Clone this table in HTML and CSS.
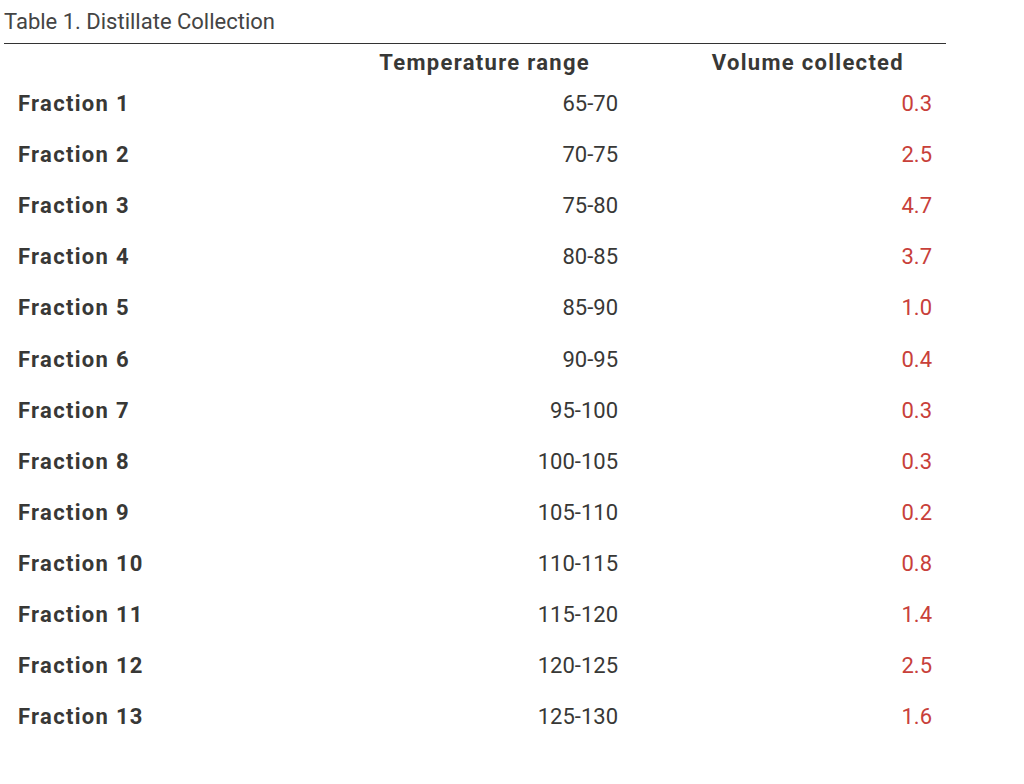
FILE: index.html
```html
<!DOCTYPE html>
<html>
<head>
<meta charset="utf-8">
<link rel="stylesheet" href="styles.css">
</head>
<body>
<table class="data">
<caption class="cap">Table 1. Distillate Collection</caption>
<thead>
<tr><th class="h-empty"></th><th class="h-num h-temp">Temperature range</th><th class="h-num h-vol">Volume collected</th></tr>
</thead>
<tbody>
<tr><th class="lbl">Fraction 1</th><td class="temp">65-70</td><td class="vol">0.3</td></tr>
<tr><th class="lbl">Fraction 2</th><td class="temp">70-75</td><td class="vol">2.5</td></tr>
<tr><th class="lbl">Fraction 3</th><td class="temp">75-80</td><td class="vol">4.7</td></tr>
<tr><th class="lbl">Fraction 4</th><td class="temp">80-85</td><td class="vol">3.7</td></tr>
<tr><th class="lbl">Fraction 5</th><td class="temp">85-90</td><td class="vol">1.0</td></tr>
<tr><th class="lbl">Fraction 6</th><td class="temp">90-95</td><td class="vol">0.4</td></tr>
<tr><th class="lbl">Fraction 7</th><td class="temp">95-100</td><td class="vol">0.3</td></tr>
<tr><th class="lbl">Fraction 8</th><td class="temp">100-105</td><td class="vol">0.3</td></tr>
<tr><th class="lbl">Fraction 9</th><td class="temp">105-110</td><td class="vol">0.2</td></tr>
<tr><th class="lbl">Fraction 10</th><td class="temp">110-115</td><td class="vol">0.8</td></tr>
<tr><th class="lbl">Fraction 11</th><td class="temp">115-120</td><td class="vol">1.4</td></tr>
<tr><th class="lbl">Fraction 12</th><td class="temp">120-125</td><td class="vol">2.5</td></tr>
<tr><th class="lbl">Fraction 13</th><td class="temp">125-130</td><td class="vol">1.6</td></tr>
</tbody>
</table>
</body>
</html>
```
FILE: styles.css
```css
html, body {
  margin: 0;
  padding: 0;
  background: #fff;
}
body {
  padding: 9px 0 0 4px;
  font-family: Roboto, "Liberation Sans", sans-serif;
  color: #333;
}
.data {
  width: 942px;
  border-collapse: collapse;
  table-layout: fixed;
}
.data th, .data td {
  box-sizing: border-box;
}
.cap {
  caption-side: top;
  text-align: left;
  font-size: 22px;
  line-height: 26px;
  font-weight: 400;
  color: #444;
  padding: 0 0 8px 0;
  border-bottom: 1px solid #333;
}
.h-empty { width: 300px; }
.h-temp { width: 328px; }
.h-num {
  text-align: right;
  font-size: 22px;
  font-weight: 700;
  letter-spacing: 1.3px;
  padding: 2px 42px 0 0;
  height: 34px;
  vertical-align: middle;
  color: #383836;
}
.lbl {
  text-align: left;
  font-size: 22px;
  font-weight: 700;
  letter-spacing: 1.3px;
  padding: 0 0 0 14px;
  height: 51.1px;
  color: #383836;
}
.temp, .vol {
  text-align: right;
  font-size: 22px;
  padding: 0 14px 0 0;
  height: 51.1px;
}
.temp { color: #383836; }
.vol { color: #c8403a; }
```
